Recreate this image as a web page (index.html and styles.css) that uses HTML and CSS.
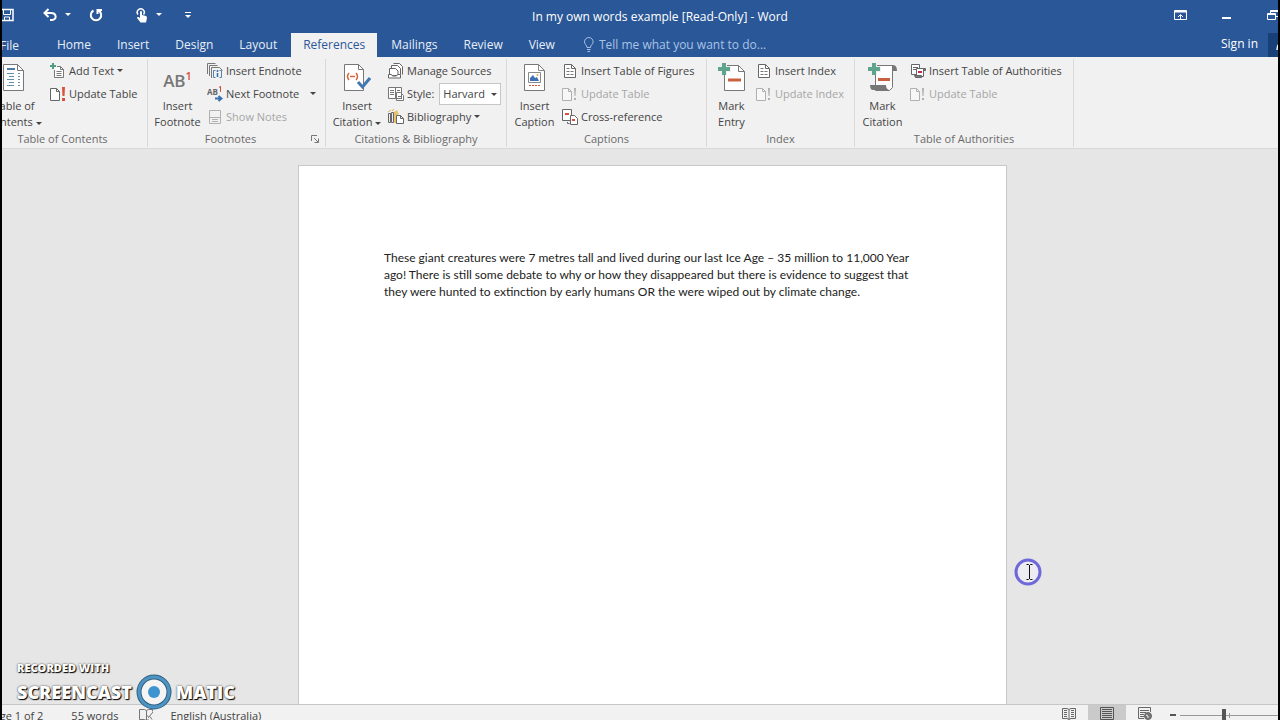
FILE: index.html
```
<!DOCTYPE html>
<html lang="en">

<head>
    <meta charset="UTF-8">
    <meta name="viewport" content="width=device-width, initial-scale=1.0">
    <title>In my own words example [Read-Only] - Word</title>
    <link rel="stylesheet" href="styles.css">
</head>

<body>
    <!-- shared icons -->
    <svg class="sprite" aria-hidden="true">
        <symbol id="doc-lines" viewBox="0 0 16 16">
            <path d="M2.5 1.5h7l4 4v9h-11z" fill="#fff" stroke="#666" />
            <path d="M9.5 1.5v4h4" fill="none" stroke="#666" />
            <path d="M4.500 5.500h3M4.500 8.500h7M4.500 11.500h7" stroke="#777" stroke-dasharray="3 1" />
        </symbol>
        <symbol id="doc-add" viewBox="0 0 16 16">
            <path d="M4.500 3.500h6l3 3v8h-9z" fill="#fff" stroke="#777" />
            <path d="M10.500 3.500v3h3M6.500 8.500h5M6.500 10.500h5M6.500 12.500h5" fill="none" stroke="#777" />
            <path d="M3.500 0v7M0 3.500h7" stroke="#f1f1f1" stroke-width="3" />
            <path d="M3 0v6M0 3h6" stroke="#4f9d83" stroke-width="2" />
        </symbol>
        <symbol id="doc-update" viewBox="0 0 16 16">
            <path d="M.5 2.500h6l3 3v9H.5z" fill="#fff" stroke="#666" />
            <path d="M6.500 2.500v3h3" fill="none" stroke="#666" />
            <path d="M12 1h3l-.5 9h-2zM12 12h3v3h-3z" fill="#d9513a" />
        </symbol>
        <symbol id="doc-update-off" viewBox="0 0 16 16">
            <path d="M.5 2.500h6l3 3v9H.5z" fill="#f7f7f7" stroke="#b0b0b0" />
            <path d="M6.500 2.500v3h3" fill="none" stroke="#b0b0b0" />
            <path d="M12 2h2l-.5 8h-1zM12 12h2v2h-2z" fill="#b0b0b0" />
        </symbol>
    </svg>

    <div class="window">
        <header class="titlebar">
            <div class="quick-access">
                <button class="icon-btn" aria-label="Save">
                    <svg width="12" height="14" viewBox="2 0 12 14" fill="none" stroke="#fff">
                        <path d="M1 1.500h12v11H1z" stroke-width="1.500" />
                        <path d="M3.500 1.500v5h7v-5M4.500 12v-3h5v3" />
                    </svg>
                </button>
                <button class="icon-btn undo" aria-label="Undo">
                    <svg width="14" height="14" viewBox="0 0 14 14" fill="none" stroke="#fff" stroke-width="2">
                        <path d="M5.500 1L1.500 5l4 4M2 5h6c6 0 6 7 1 7H7" />
                    </svg>
                    <i class="caret"></i>
                </button>
                <button class="icon-btn repeat" aria-label="Repeat">
                    <svg width="14" height="14" viewBox="0 0 14 14" fill="none" stroke="#fff" stroke-width="2">
                        <path d="M4.500 2.500a5.200 5.200 0 1 0 5 0M8.500 6V2h4.500" />
                    </svg>
                </button>
                <button class="icon-btn touch" aria-label="Touch/Mouse Mode">
                    <svg width="13" height="16" viewBox="0 0 13 16">
                        <path d="M3 7.500a3.500 3.500 0 1 1 5.500 0" fill="none" stroke="#fff" stroke-width="1.500" />
                        <path d="M5 4.500q1-1 2 0V8l4 1q1 .5 1 2l-1 4.500H5.500L2 11q0-1.500 1.500-1L5 11z" fill="#fff" />
                    </svg>
                    <i class="caret"></i>
                </button>
                <button class="icon-btn" aria-label="Customize Quick Access Toolbar">
                    <svg width="8" height="8" viewBox="0 0 8 8">
                        <path d="M1 1.500h6" stroke="#fff" />
                        <path d="M1 4h6L4 7z" fill="#fff" />
                    </svg>
                </button>
            </div>
            <h1 class="doc-title">In my own words example [Read-Only] - Word</h1>
            <div class="window-controls">
                <button class="control" aria-label="Ribbon Display Options">
                    <svg width="14" height="12" viewBox="0 0 14 12" fill="none" stroke="#fff">
                        <path d="M.5 1.500h12v9H.5zM.5 3h12M6.500 10V6M4 8l2.500-2.500L9 8" />
                        <path d="M.5 2.500h12" />
                    </svg>
                </button>
                <button class="control" aria-label="Minimize">
                    <svg width="10" height="4" viewBox="0 0 10 4">
                        <path d="M0 1h9" stroke="#fff" stroke-width="2" />
                    </svg>
                </button>
                <button class="control" aria-label="Restore Down">
                    <svg width="12" height="12" viewBox="0 0 12 12" fill="none" stroke="#fff">
                        <path d="M.5 4.500h8v6h-8zM.5 5.500h8M3.500 4V1.500h8v6H9M3.500 2.500h8" />
                    </svg>
                </button>
            </div>
        </header>

        <nav class="tabs">
            <button class="tab file">File</button>
            <button class="tab">Home</button>
            <button class="tab">Insert</button>
            <button class="tab">Design</button>
            <button class="tab">Layout</button>
            <button class="tab active">References</button>
            <button class="tab">Mailings</button>
            <button class="tab">Review</button>
            <button class="tab">View</button>
            <label class="tell-me">
                <svg width="12" height="15" viewBox="0 0 12 15" fill="none" stroke="#a9c3e6">
                    <path d="M4 10.500C4 8 1.500 7.500 1.500 4.800a4.300 4.300 0 0 1 8.600 0C10.100 7.500 7.500 8 7.500 10.500zM4 12.500h3.500M4.500 14.500h2.500" />
                </svg>
                <input type="text" aria-label="Tell me" placeholder="Tell me what you want to do...">
            </label>
            <a class="sign-in" href="#">Sign in</a>
            <button class="share" aria-label="Share">
                <svg width="14" height="16" viewBox="0 0 14 16" fill="none" stroke="#fff" stroke-width="1.500">
                    <circle cx="7" cy="4" r="3" />
                    <path d="M1 15q0-7 6-7t6 7" />
                </svg>
            </button>
        </nav>

        <div class="ribbon">
            <section class="group group-toc">
                <div class="tools">
                    <button class="big">
                        <svg width="22" height="30" viewBox="0 0 22 30">
                            <path d="M.5 1.500h14l6 6v20H.5z" fill="#fff" stroke="#777" />
                            <path d="M14.500 1.500v6h6" fill="none" stroke="#777" />
                            <path d="M4 6h8" stroke="#4d7ba8" stroke-width="2" />
                            <path d="M4 10.500h7M6 13.500h5M4 16.500h7M6 19.500h5M4 22.500h7M15 10.500h2M15 13.500h2M15 16.500h2M15 19.500h2M15 22.500h2" stroke="#6590aa" />
                        </svg>
                        <span>Table of</span>
                        <span>Contents <i class="caret"></i></span>
                    </button>
                    <div class="stack">
                        <button class="small"><svg class="ico"><use href="#doc-add" /></svg>Add Text <i class="caret"></i></button>
                        <button class="small"><svg class="ico"><use href="#doc-update" /></svg>Update Table</button>
                    </div>
                </div>
                <h2 class="group-name">Table of Contents</h2>
            </section>

            <section class="group group-footnotes">
                <div class="tools">
                    <button class="big">
                        <span class="ab">AB<sup>1</sup></span>
                        <span>Insert</span>
                        <span>Footnote</span>
                    </button>
                    <div class="stack">
                        <button class="small">
                            <svg class="ico" viewBox="0 0 16 16" fill="none" stroke="#777">
                                <path d="M.5 11V.5h8M2.500 13V2.500h8M4.500 15V4.500h8l3 3" />
                                <path d="M8.500 7.500h-2v7h2M12.500 7.500h2v7h-2" stroke="#5a7fa8" />
                                <path d="M10.500 7v2M10.500 10v4" stroke="#2f6db0" stroke-width="1.500" />
                            </svg>Insert Endnote
                        </button>
                        <button class="small next-note">
                            <svg class="ico" viewBox="0 0 16 16">
                                <text x="0" y="9" class="ab-mini">AB</text>
                                <path d="M13.500 6V0M12 1.500l1.500-1" fill="none" stroke="#d9513a" />
                                <path d="M8 12.500h6M11.500 10l3 2.500-3 2.500" fill="none" stroke="#3a6fb0" stroke-width="2" />
                            </svg>Next Footnote <i class="caret"></i>
                        </button>
                        <button class="small" disabled>
                            <svg class="ico" viewBox="0 0 16 16" fill="none" stroke="#b0b0b0">
                                <path d="M2.500 1.500h11v13h-11zM2.500 8.500h11M5 10.500h6M5 12.500h6" />
                            </svg>Show Notes
                        </button>
                    </div>
                </div>
                <div class="name-row">
                    <h2 class="group-name">Footnotes</h2>
                    <button class="launcher" aria-label="Footnote and Endnote settings">
                        <svg width="8" height="8" viewBox="0 0 8 8" fill="none" stroke="#777">
                            <path d="M.5 6V.5H6M3 3l4 4M7.500 3.500v4h-4" />
                        </svg>
                    </button>
                </div>
            </section>

            <section class="group group-citations">
                <div class="tools">
                    <button class="big">
                        <svg width="28" height="30" viewBox="0 0 28 30">
                            <path d="M1.500 1.500h14l5 5v21h-19z" fill="#fff" stroke="#777" />
                            <path d="M15.500 1.500v5h5" fill="none" stroke="#777" />
                            <path d="M6 10q-3 3.500 0 7M13 10q3 3.500 0 7M7 13.500h5" fill="none" stroke="#d9633a" stroke-width="1.500" />
                            <path d="M15 19l4.500 5L27 15" fill="none" stroke="#4377b0" stroke-width="3" />
                        </svg>
                        <span>Insert</span>
                        <span>Citation <i class="caret"></i></span>
                    </button>
                    <div class="stack">
                        <button class="small">
                            <svg class="ico" viewBox="0 0 16 16" fill="#fff" stroke="#666">
                                <path d="M5.500 .5h6l3 3v8M3.500 2.500h6l3 3v7h-9z" />
                                <path d="M1.500 12v-6.500h6l2.500 2.500v4" />
                                <path d="M.5 11.500h3l1 1.500h4l1-1.500h3v3.500H.5z" />
                            </svg>Manage Sources
                        </button>
                        <div class="style-row">
                            <svg class="ico" viewBox="0 0 16 16" fill="#fff" stroke="#777">
                                <path d="M.5 1.500h7v11h-7zM7.500 1.500h6v11h-6zM8.500 6.500h4l3 3v5h-7z" />
                                <path d="M2 4.500h4M2 6.500h4M2 8.500h4M9 4.500h3M10 10.500h3M10 12.500h4" />
                            </svg>
                            <label for="style">Style:</label>
                            <span class="combo">
                                <select id="style">
                                    <option>Harvard</option>
                                </select>
                                <i class="caret"></i>
                            </span>
                        </div>
                        <button class="small">
                            <svg class="ico" viewBox="0 0 16 16">
                                <path d="M.5 4.500h2v9h-2zM3.500 3.500h2v10h-2z" fill="#eee" stroke="#666" />
                                <path d="M6 3l3-2 2 4-3 2v7H6z" fill="#e5c56c" />
                                <path d="M0 3l3-2M4 2l2-2" stroke="#d5b45a" />
                                <path d="M8.500 6.500h4l3 3v5h-7z" fill="#fff" stroke="#666" />
                                <path d="M12.500 6.500v3h3" fill="none" stroke="#666" />
                            </svg>Bibliography <i class="caret"></i>
                        </button>
                    </div>
                </div>
                <h2 class="group-name">Citations &amp; Bibliography</h2>
            </section>

            <section class="group group-captions">
                <div class="tools">
                    <button class="big">
                        <svg width="22" height="30" viewBox="0 0 22 30">
                            <path d="M.5 1.500h14l6 6v20H.5z" fill="#fff" stroke="#777" />
                            <path d="M14.500 1.500v6h6M4.500 9.500h12v10h-12z" fill="none" stroke="#888" />
                            <path d="M6 18v-3l3-3 2 3 2-1 2 4z" fill="#3f6fb5" />
                            <circle cx="13.500" cy="12" r="1" fill="#d9a441" />
                            <path d="M5 22.500h11" stroke="#d9513a" stroke-dasharray="2 1" />
                        </svg>
                        <span>Insert</span>
                        <span>Caption</span>
                    </button>
                    <div class="stack">
                        <button class="small"><svg class="ico"><use href="#doc-lines" /></svg>Insert Table of Figures</button>
                        <button class="small" disabled><svg class="ico"><use href="#doc-update-off" /></svg>Update Table</button>
                        <button class="small">
                            <svg class="ico" viewBox="0 0 16 16" fill="#fff" stroke="#666">
                                <path d="M.5 .5h9v11h-9z" />
                                <path d="M8.500 15.500v-9h4l3 3v6zM5.500 13v1.500h2" />
                                <path d="M3 5h4M10 11h3" stroke="#d9513a" stroke-width="2" />
                            </svg>Cross-reference
                        </button>
                    </div>
                </div>
                <h2 class="group-name">Captions</h2>
            </section>

            <section class="group group-index">
                <div class="tools">
                    <button class="big">
                        <svg width="28" height="30" viewBox="0 0 28 30">
                            <path d="M6.500 2.500h14l6 6v19h-20z" fill="#fff" stroke="#777" />
                            <path d="M20.500 2.500v6h6" fill="none" stroke="#777" />
                            <path d="M6 0v12M0 6h13" stroke="#f1f1f1" stroke-width="6" />
                            <path d="M6 0v12M0 6h12" stroke="#5fa58d" stroke-width="4" />
                            <path d="M10 17h13" stroke="#c9603f" stroke-width="3" />
                        </svg>
                        <span>Mark</span>
                        <span>Entry</span>
                    </button>
                    <div class="stack">
                        <button class="small"><svg class="ico"><use href="#doc-lines" /></svg>Insert Index</button>
                        <button class="small" disabled><svg class="ico"><use href="#doc-update-off" /></svg>Update Index</button>
                    </div>
                </div>
                <h2 class="group-name">Index</h2>
            </section>

            <section class="group group-authorities">
                <div class="tools">
                    <button class="big">
                        <svg width="30" height="30" viewBox="0 0 30 30">
                            <path d="M7.500 2.500h17v22l-3 3h-14z" fill="#fff" stroke="#777" />
                            <path d="M24 2q5-1 5 6h-4zM2 22h16q0 4 3 5H5q-3 0-3-5z" fill="#777" />
                            <path d="M6 0v12M0 6h13" stroke="#f1f1f1" stroke-width="6" />
                            <path d="M6 0v12M0 6h12" stroke="#5fa58d" stroke-width="4" />
                            <path d="M10 16.500h12" stroke="#c9603f" stroke-width="3" />
                        </svg>
                        <span>Mark</span>
                        <span>Citation</span>
                    </button>
                    <div class="stack">
                        <button class="small">
                            <svg class="ico" viewBox="0 0 16 16" fill="#fff" stroke="#666">
                                <path d="M1.500 1.500h8v10h-8zM3 4.500h5M3 6.500h3" />
                                <path d="M6.500 5.500h7v8h-7z" />
                                <path d="M4.500 12.500h7v2h-6zM13.500 5.500h2v2h-2z" fill="#777" />
                                <path d="M8 9h4" stroke="#c22f4a" stroke-width="2" />
                            </svg>Insert Table of Authorities
                        </button>
                        <button class="small" disabled><svg class="ico"><use href="#doc-update-off" /></svg>Update Table</button>
                    </div>
                </div>
                <h2 class="group-name">Table of Authorities</h2>
            </section>
        </div>

        <main class="workspace">
            <article class="page">
                <p>These giant creatures were 7 metres tall and lived during our last Ice Age – 35 million to 11,000 Year<br>
                    ago! There is still some debate to why or how they disappeared but there is evidence to suggest that<br>
                    they were hunted to extinction by early humans OR the were wiped out by climate change.</p>
            </article>
        </main>

        <footer class="statusbar">
            <span class="page-count">Page 1 of 2</span>
            <span class="word-count">55 words</span>
            <svg class="proof" width="15" height="14" viewBox="0 0 15 14" fill="none" stroke="#777">
                <path d="M7.500 2.500v10l-2-1h-5v-10h5zl2-1h4v2M7.500 12.500l2-1M14 4L9.500 9.500l-1-2M11 8.500l2 3" />
            </svg>
            <span>English (Australia)</span>
            <div class="views">
                <button class="view" aria-label="Read Mode">
                    <svg width="14" height="13" viewBox="0 0 14 13" fill="none" stroke="#666">
                        <path d="M7 2.500l-2-1H.5v10H5l2 1 2-1h4.500v-10H9l-2 1v10M2 3.500h3M2 5.500h3M2 7.500h3M2 9.500h3M9 3.500h3M9 5.500h3M9 7.500h3M9 9.500h3" />
                    </svg>
                </button>
                <button class="view current" aria-label="Print Layout">
                    <svg width="14" height="13" viewBox="0 0 14 13" fill="none" stroke="#555">
                        <path d="M.5 .5h13v12H.5zM2 2.500h10M2 4.500h10M2 6.500h10M2 8.500h10M2 10.500h10" />
                    </svg>
                </button>
                <button class="view" aria-label="Web Layout">
                    <svg width="14" height="13" viewBox="0 0 14 13" fill="none" stroke="#666">
                        <path d="M12.500 5V.5H.5v11H6M2 3.500h9M2 5.500h6M2 7.500h4M2 9.500h4" />
                        <circle cx="10" cy="9" r="3.500" fill="#777" />
                        <path d="M8 8l2 1v2" stroke="#eee" />
                    </svg>
                </button>
            </div>
            <button class="zoom-out" aria-label="Zoom Out"></button>
            <input class="zoom" type="range" aria-label="Zoom" min="0" max="100" value="40">
        </footer>

        <div class="watermark">
            <span class="recorded">RECORDED WITH</span>
            <div class="brand">
                <span>SCREENCAST</span>
                <svg width="36" height="36" viewBox="0 0 36 36">
                    <circle cx="18" cy="18" r="15" fill="#f4f4f4" stroke="#30607f" stroke-width="5" />
                    <circle cx="18" cy="18" r="15" fill="none" stroke="#4d94c4" stroke-width="3" />
                    <circle cx="18" cy="18" r="6" fill="#3f93cf" />
                </svg>
                <span>MATIC</span>
            </div>
        </div>

        <svg class="pointer" width="28" height="28" viewBox="0 0 28 28" fill="none">
            <circle cx="14" cy="14" r="12" fill="#ececf2" stroke="#6f68d8" stroke-width="3" />
            <path d="M12.500 6.500h2l1 1 1-1h2M15.500 7v14M12.500 21.500h2l1-1 1 1h2" stroke="#111" />
        </svg>
    </div>
</body>

</html>
```
FILE: styles.css
```
* {
    box-sizing: border-box;
}

body {
    margin: 0;
    background: #000;
    font-family: "Open Sans", "Noto Sans", sans-serif;
    font-size: 11px;
    color: #444;
}

button,
input,
select {
    margin: 0;
    padding: 0;
    border: none;
    background: none;
    font: inherit;
    color: inherit;
}

h1,
h2,
p {
    margin: 0;
    font-weight: normal;
}

svg {
    flex: none;
}

.sprite {
    position: absolute;
    width: 0;
    height: 0;
}

.window {
    position: relative;
    display: flex;
    flex-direction: column;
    height: 100vh;
    margin: 0 2px;
    overflow: hidden;
    background: #e6e6e6;
    white-space: nowrap;
}

.caret {
    display: inline-block;
    border: 3px solid transparent;
    border-top-color: currentColor;
    border-bottom: none;
    vertical-align: middle;
}

/* title bar */
.titlebar {
    display: flex;
    align-items: center;
    height: 33px;
    flex: none;
    background: #2a5797;
    color: #fff;
    font-size: 12px;
}

.quick-access {
    display: flex;
    align-items: center;
    width: 240px;
    margin-top: -4px;
}

.icon-btn {
    display: flex;
    align-items: center;
    gap: 8px;
}

.icon-btn.undo {
    margin-left: 29px;
}

.icon-btn.repeat {
    margin-left: 18px;
}

.icon-btn.touch {
    margin: 0 22px 0 32px;
}

.doc-title {
    flex: 1;
    text-align: center;
    font-size: 12px;
}

.window-controls {
    display: flex;
    justify-content: flex-end;
    width: 218px;
    margin-right: -18px;
}

.control {
    width: 46px;
    height: 30px;
}

/* tabs */
.tabs {
    display: flex;
    align-items: stretch;
    gap: 2px;
    height: 24px;
    flex: none;
    background: #2a5797;
    color: #e8eef7;
    font-size: 12px;
}

.tab {
    padding: 0 12px 2px;
}

.tab.file {
    padding: 0 24px 0 0;
    margin-left: -2px;
}

.tab.active {
    background: #f1f1f1;
    color: #2b579a;
}

.tell-me {
    display: flex;
    align-items: center;
    flex: 1;
    gap: 4px;
    margin-left: 14px;
    padding-bottom: 2px;
}

.tell-me input {
    flex: 1;
}

.tell-me input::placeholder {
    color: #a9c3e6;
    opacity: 1;
}

.sign-in {
    margin-right: 8px;
    line-height: 22px;
    color: #fff;
    text-decoration: none;
}

.share {
    width: 30px;
    margin-right: -20px;
    background: #173f78;
}

/* ribbon */
.ribbon {
    display: flex;
    flex: none;
    height: 92px;
    padding-top: 2px;
    background: #f1f1f1;
    border-bottom: 1px solid #d8d8d8;
}

.group {
    display: flex;
    flex-direction: column;
    padding: 0 4px;
    border-right: 1px solid #d9d9d9;
    margin-bottom: 1px;
}

.group-toc {
    width: 170px;
    margin-left: -24px;
}

.group-footnotes {
    width: 178px;
}

.group-citations {
    width: 181px;
}

.group-captions {
    width: 200px;
}

.group-index {
    width: 148px;
}

.group-authorities {
    width: 219px;
}

.tools {
    display: flex;
    flex: 1;
    gap: 4px;
}

.big {
    display: flex;
    flex-direction: column;
    align-items: center;
    justify-content: flex-start;
    min-width: 47px;
    padding-top: 4px;
    line-height: 16px;
}

.big svg {
    margin-bottom: 5px;
}

.group-toc .big {
    width: 64px;
}

.group-footnotes .big {
    width: 51px;
}

.group-citations .big {
    width: 54px;
}

.group-index .big {
    min-width: 41px;
}

.ab {
    height: 35px;
    padding-top: 10px;
    font-size: 17px;
    font-weight: 600;
    color: #777;
}

.ab sup {
    font-size: 11px;
    line-height: 0;
    color: #d9513a;
}

.ab-mini {
    font-size: 8px;
    font-weight: 700;
    fill: #666;
    stroke: none;
}

.small,
.style-row {
    display: flex;
    align-items: center;
    gap: 3px;
    height: 23px;
}

.small:disabled {
    color: #a6a6a6;
}

.next-note .caret {
    margin-left: 8px;
}

.ico {
    width: 16px;
    height: 16px;
}

.combo {
    position: relative;
    margin-left: 2px;
}

.combo select {
    width: 62px;
    height: 22px;
    padding-left: 3px;
    appearance: none;
    background: #fff;
    border: 1px solid #c6c6c6;
}

.combo .caret {
    position: absolute;
    top: 10px;
    right: 4px;
    pointer-events: none;
}

.group-name {
    flex: 1;
    font-size: 11px;
    line-height: 16px;
    text-align: center;
    color: #6a6a6a;
}

.tools + .group-name {
    flex: none;
}

.name-row {
    display: flex;
    align-items: center;
}

.launcher {
    width: 12px;
    line-height: 0;
}

/* document */
.workspace {
    display: flex;
    justify-content: center;
    flex: 1;
    min-height: 0;
    padding: 16px 0 0 25px;
}

.page {
    width: 709px;
    padding: 83px 85px;
    background: #fff;
    border: 1px solid #c8c8c8;
    border-bottom: none;
    font-family: Lato, "Open Sans", sans-serif;
    font-size: 12px;
    line-height: 17px;
    color: #222;
}

/* status bar */
.statusbar {
    display: flex;
    align-items: center;
    flex: none;
    height: 21px;
    margin-bottom: -5px;
    background: #f1f1f1;
    border-top: 1px solid #c6c6c6;
}

.page-count {
    margin-left: -15px;
}

.word-count {
    margin: 0 21px 0 28px;
}

.proof {
    margin-right: 16px;
}

.views {
    display: flex;
    align-self: stretch;
    margin-left: auto;
}

.view {
    width: 38px;
}

.view.current {
    background: #cacaca;
}

.zoom-out {
    width: 6px;
    height: 2px;
    margin: 0 4px 0 6px;
    background: #555;
}

.zoom {
    width: 110px;
    height: 12px;
    margin-right: -12px;
    appearance: none;
    background: linear-gradient(#999, #999) center / 100% 1px no-repeat,
        linear-gradient(#999, #999) 45% center / 1px 5px no-repeat;
}

.zoom::-webkit-slider-thumb {
    appearance: none;
    width: 4px;
    height: 12px;
    background: #555;
}

/* recorder overlay */
.watermark {
    position: absolute;
    left: 15px;
    bottom: 10px;
    color: #fff;
    font-weight: 800;
    text-shadow: 1px 1px 1px #000, 0 0 2px #333;
}

.recorded {
    display: block;
    line-height: 14px;
    margin-bottom: -1px;
}

.brand {
    display: flex;
    align-items: center;
    gap: 4px;
    font-size: 18px;
}

.pointer {
    position: absolute;
    left: 1012px;
    top: 558px;
}
```
